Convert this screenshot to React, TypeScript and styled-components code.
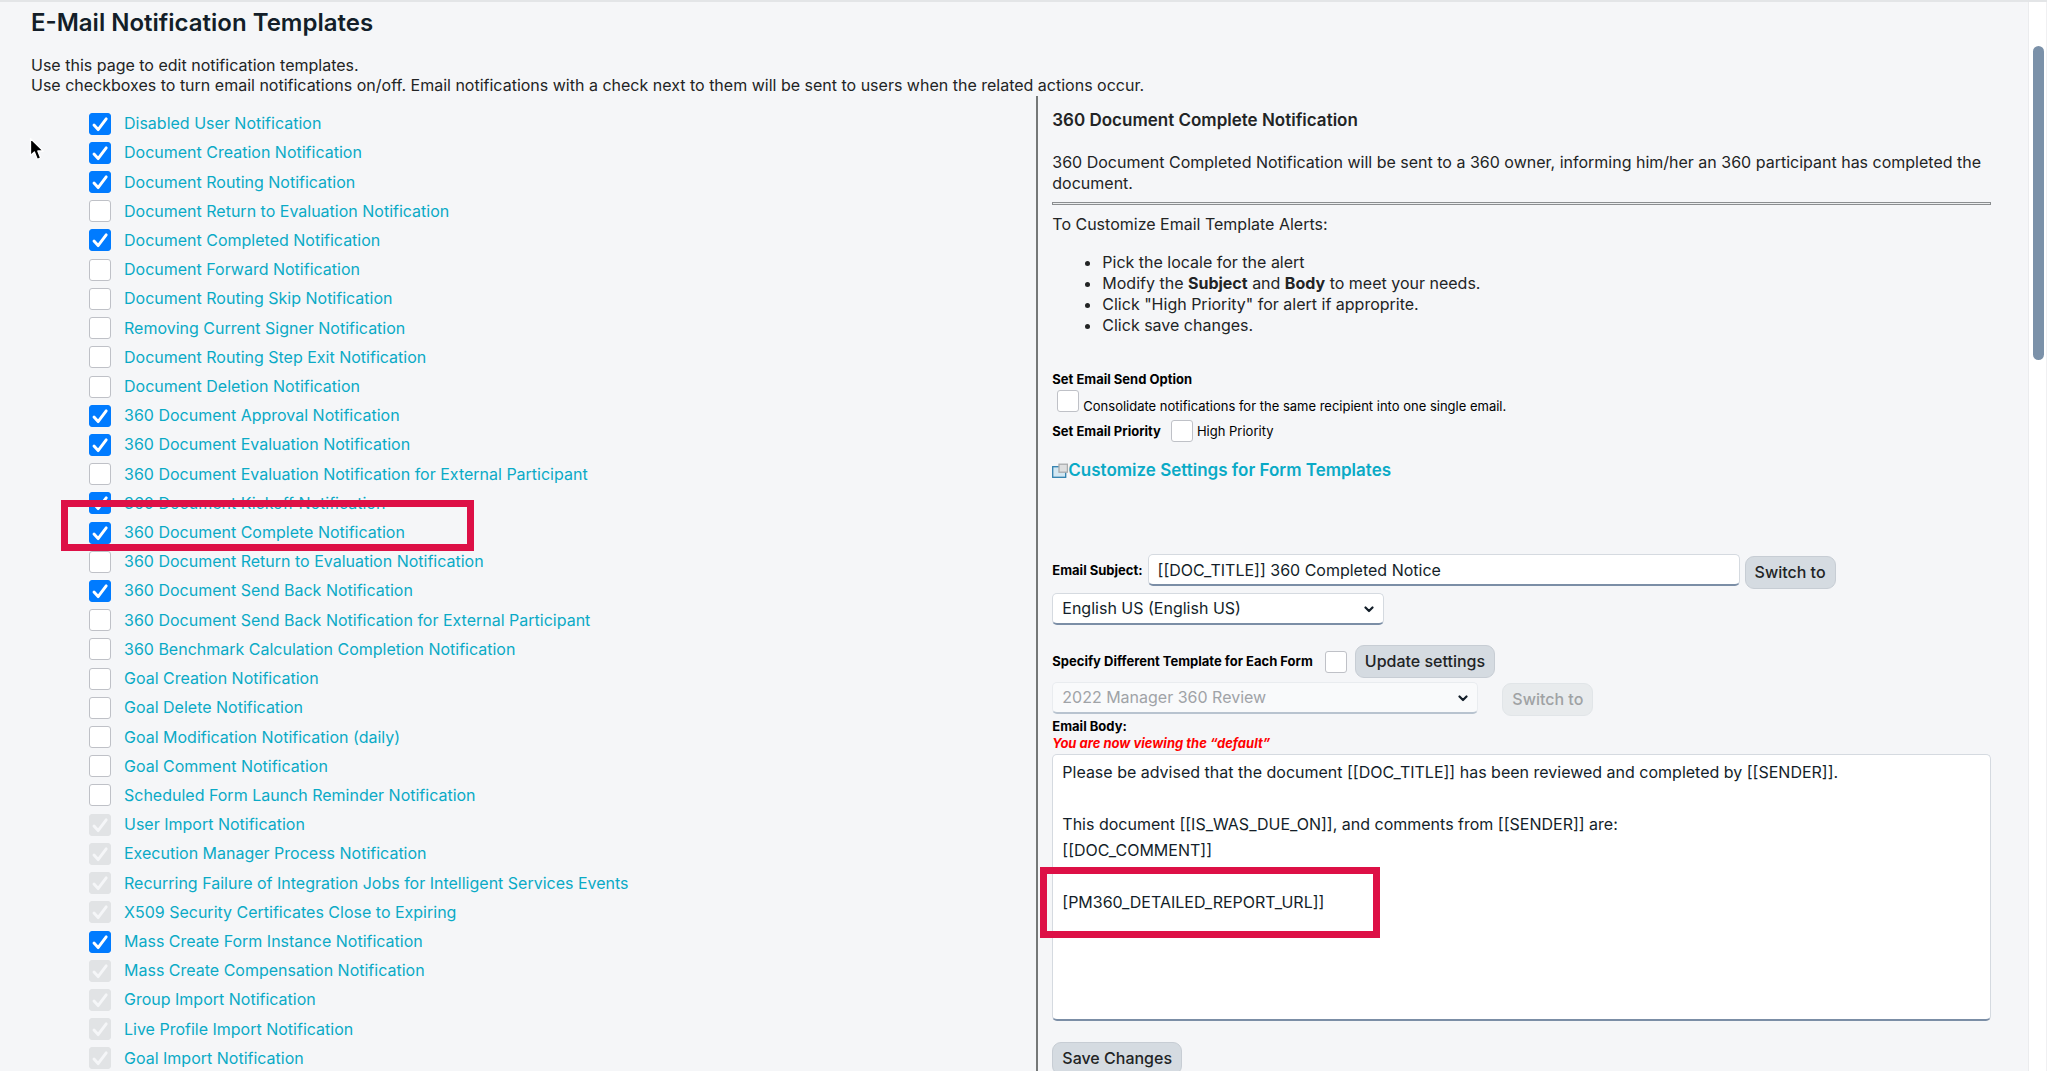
import React from "react";
import styled, { createGlobalStyle, css } from "styled-components";

const color = {
  page: "#f5f6f8",
  text: "#222425",
  ink: "#131e29",
  link: "#0aaac6",
  blue: "#007bff",
  highlight: "#dd1046",
  edge: "#d5dae0",
};

const GlobalStyle = createGlobalStyle`
  *, *::before, *::after { box-sizing: border-box; }
  body {
    margin: 0;
    background: ${color.page};
    color: ${color.text};
    font-family: Inter, "Liberation Sans", Arial, sans-serif;
    font-size: 16px;
    line-height: 21px;
  }
  input, select, textarea, button { font: inherit; }
`;

const Page = styled.div`
  display: flex;
  height: 100vh;
  overflow: hidden;
  border-top: 2px solid #e3e5e7;
`;

const Main = styled.main`
  position: relative;
  flex: 1;
  min-width: 0;
  display: flex;
  flex-direction: column;
`;

const PageHeader = styled.header`
  padding: 6px 31px 1px;
`;

const PageTitle = styled.h1`
  margin: 0 0 17px;
  font-size: 24px;
  line-height: 30px;
  font-weight: 600;
  color: ${color.ink};
`;

const Intro = styled.p`
  margin: 0;
  line-height: 20px;
`;

const Columns = styled.div`
  flex: 1;
  min-height: 0;
  display: grid;
  grid-template-columns: minmax(0, 511fr) minmax(0, 489fr);
`;

const NotificationList = styled.ul`
  list-style: none;
  margin: 0 0 -2px;
  padding: 13px 0 0 89px;
  min-height: 0;
  display: grid;
  grid-auto-rows: minmax(0, 1fr);
`;

const NotificationRow = styled.li`
  position: relative;
  display: flex;
  align-items: center;
  gap: 13px;
`;

const NotificationLink = styled.a`
  color: ${color.link};
  text-decoration: none;
`;

const Highlight = styled.div`
  position: absolute;
  border: 7px solid ${color.highlight};
  pointer-events: none;
  z-index: 1;
`;

const RowHighlight = styled(Highlight)`
  left: -28px;
  top: -18px;
  width: 413px;
  height: 51px;
`;

const TokenHighlight = styled(Highlight)`
  left: -12px;
  top: 113px;
  width: 340px;
  height: 71px;
`;

const CheckFrame = styled.span`
  position: relative;
  flex: none;
  display: block;
  width: 22px;
  height: 22px;
`;

const CheckInput = styled.input`
  appearance: none;
  display: block;
  width: 22px;
  height: 22px;
  margin: 0;
  border: 1px solid #bfc1c7;
  border-radius: 3px;
  background: #fff;
  &:checked {
    border-color: ${color.blue};
    background: ${color.blue};
  }
  &:checked:disabled {
    border-color: #e1e3e5;
    background: #e1e3e5;
  }
`;

const CheckMark = styled.svg`
  position: absolute;
  inset: 0;
  pointer-events: none;
`;

const Detail = styled.section`
  min-height: 0;
  overflow: hidden;
  padding: 14px 37px 0 14px;
  border-left: 2px solid #757878;
`;

const DetailTitle = styled.h2`
  margin: 0 0 21px;
  font-size: 17px;
  line-height: 21px;
  font-weight: 600;
`;

const Paragraph = styled.p`
  margin: 0;
`;

const Rule = styled.hr`
  margin: 8px 0 9px;
  height: 3px;
  border: 1px solid #8b8e90;
  background: #eceeef;
`;

const Steps = styled.ul`
  margin: 17px 0 0;
  padding: 0 0 0 50px;
  line-height: 21px;
  b { font-weight: 700; }
`;

const SmallHeading = styled.h3`
  margin: 34px 0 0;
  font-size: 13px;
  line-height: 18px;
  font-weight: 700;
  color: #000;
`;

const OptionRow = styled.div`
  display: flex;
  align-items: center;
  gap: 4px;
  color: #000;
  font-size: 13px;
  line-height: 18px;
`;

const ConsolidateRow = styled(OptionRow)`
  align-items: flex-end;
  margin: 2px 0 5px 5px;
  ${CheckFrame} { margin-bottom: 3px; }
`;

const PriorityLabel = styled.b`
  margin-right: 6px;
`;

const SettingsLink = styled.a`
  display: flex;
  align-items: center;
  width: max-content;
  margin: 18px 0 70px;
  color: ${color.link};
  font-size: 17px;
  font-weight: 600;
  text-decoration: none;
`;

const FieldRow = styled.div<{ $gap: number; $drop?: number }>`
  display: flex;
  align-items: center;
  gap: ${(p) => p.$gap}px;
  > button { margin-top: ${(p) => p.$drop ?? 0}px; }
`;

const FieldLabel = styled.label`
  font-size: 13px;
  line-height: 17px;
  font-weight: 700;
  color: #000;
`;

const field = css`
  border: 1px solid ${color.edge};
  border-bottom: 2px solid #7b8ea6;
  border-radius: 5px;
  background: #fff;
  color: ${color.ink};
  padding: 0 9px;
`;

const SubjectInput = styled.input`
  ${field}
  flex: 0 1 592px;
  min-width: 0;
  height: 32px;
  outline: none;
`;

const SelectFrame = styled.span<{ $width: number }>`
  position: relative;
  display: block;
  flex: 0 1 ${(p) => p.$width}px;
  width: ${(p) => p.$width}px;
`;

const Select = styled.select`
  ${field}
  appearance: none;
  display: block;
  width: 100%;
  height: 32px;
  &:disabled {
    opacity: 1;
    color: #a0a3a7;
    background: #f9fafb;
    border-color: #e9ecef;
    border-bottom-color: #b8c3cf;
  }
`;

const Chevron = styled.svg`
  position: absolute;
  right: 10px;
  top: 13px;
  pointer-events: none;
`;

const Button = styled.button`
  flex: none;
  height: 33px;
  padding: 0 9px;
  border: 1px solid #c7cdd4;
  border-radius: 9px;
  background: #d5dbe1;
  color: ${color.text};
  font-weight: 500;
  &:disabled {
    border-color: #e1e5e8;
    background: #e8ebed;
    color: #9fa2a4;
  }
`;

const LocaleRow = styled.div`
  margin: 4px 0 20px;
`;

const SpecifyRow = styled(FieldRow)`
  margin-bottom: 2px;
  ${FieldLabel} { margin-right: 4px; }
`;

const BodyLabel = styled(FieldLabel)`
  display: block;
  margin-top: 2px;
`;

const DefaultNote = styled.p`
  margin: 0 0 2px;
  font-size: 13px;
  line-height: 17px;
  font-weight: 700;
  font-style: italic;
  color: #f00;
`;

const BodyFrame = styled.div`
  position: relative;
  margin-bottom: 21px;
`;

const BodyInput = styled.textarea`
  ${field}
  display: block;
  width: 100%;
  height: 267px;
  padding: 4px 9px;
  line-height: 26px;
  resize: none;
  outline: none;
`;

const ScrollRail = styled.div`
  flex: none;
  width: 19px;
  padding: 44px 0 0 4px;
  border-left: 1px solid #ebecee;
  border-right: 1px solid #f0f0f2;
  background: #fff;
`;

const ScrollThumb = styled.div`
  width: 11px;
  height: 314px;
  border-radius: 6px;
  background: #7b91a9;
`;

const Pointer = styled.svg`
  position: absolute;
  left: 28px;
  top: 133px;
  pointer-events: none;
`;

type State = "on" | "off" | "locked";

const notifications: [string, State][] = [
  ["Disabled User Notification", "on"],
  ["Document Creation Notification", "on"],
  ["Document Routing Notification", "on"],
  ["Document Return to Evaluation Notification", "off"],
  ["Document Completed Notification", "on"],
  ["Document Forward Notification", "off"],
  ["Document Routing Skip Notification", "off"],
  ["Removing Current Signer Notification", "off"],
  ["Document Routing Step Exit Notification", "off"],
  ["Document Deletion Notification", "off"],
  ["360 Document Approval Notification", "on"],
  ["360 Document Evaluation Notification", "on"],
  ["360 Document Evaluation Notification for External Participant", "off"],
  ["360 Document Kickoff Notification", "on"],
  ["360 Document Complete Notification", "on"],
  ["360 Document Return to Evaluation Notification", "off"],
  ["360 Document Send Back Notification", "on"],
  ["360 Document Send Back Notification for External Participant", "off"],
  ["360 Benchmark Calculation Completion Notification", "off"],
  ["Goal Creation Notification", "off"],
  ["Goal Delete Notification", "off"],
  ["Goal Modification Notification (daily)", "off"],
  ["Goal Comment Notification", "off"],
  ["Scheduled Form Launch Reminder Notification", "off"],
  ["User Import Notification", "locked"],
  ["Execution Manager Process Notification", "locked"],
  ["Recurring Failure of Integration Jobs for Intelligent Services Events", "locked"],
  ["X509 Security Certificates Close to Expiring", "locked"],
  ["Mass Create Form Instance Notification", "on"],
  ["Mass Create Compensation Notification", "locked"],
  ["Group Import Notification", "locked"],
  ["Live Profile Import Notification", "locked"],
  ["Goal Import Notification", "locked"],
];

const selected = "360 Document Complete Notification";

const bodyText = `Please be advised that the document [[DOC_TITLE]] has been reviewed and completed by [[SENDER]].

This document [[IS_WAS_DUE_ON]], and comments from [[SENDER]] are:
[[DOC_COMMENT]]

[PM360_DETAILED_REPORT_URL]]`;

function Checkbox({ id, state = "off", labelledBy }: { id?: string; state?: State; labelledBy?: string }) {
  return (
    <CheckFrame>
      <CheckInput
        type="checkbox"
        id={id}
        aria-labelledby={labelledBy}
        defaultChecked={state !== "off"}
        disabled={state === "locked"}
      />
      {state !== "off" && (
        <CheckMark viewBox="0 0 22 22" width="22" height="22" aria-hidden="true">
          <path
            d="M5 12.1 9.1 16.6 17.2 5.8"
            fill="none"
            stroke={state === "locked" ? "#f5f6f8" : "#fff"}
            strokeWidth="2.9"
            strokeLinecap="round"
            strokeLinejoin="round"
          />
        </CheckMark>
      )}
    </CheckFrame>
  );
}

function DropDown({ id, label, width, value, disabled }: { id: string; label: string; width: number; value: string; disabled?: boolean }) {
  return (
    <SelectFrame $width={width}>
      <Select id={id} aria-label={label} disabled={disabled} defaultValue={value}>
        <option value={value}>{value}</option>
      </Select>
      <Chevron width="10" height="7" viewBox="0 0 10 7" aria-hidden="true">
        <path d="M1.5 1.5 5 5 8.5 1.5" fill="none" stroke="#131e29" strokeWidth="2.2" strokeLinecap="round" strokeLinejoin="round" />
      </Chevron>
    </SelectFrame>
  );
}

function WindowsIcon() {
  return (
    <svg width="16" height="16" viewBox="0 0 16 16" aria-hidden="true">
      <rect x="0.7" y="3.7" width="13" height="10.6" fill="#d3e7f2" stroke="#2f7fae" strokeWidth="1.3" />
      <rect x="7" y="1.2" width="8.4" height="8" fill="#dedfe0" stroke="#a9abad" strokeWidth="1.3" />
    </svg>
  );
}

export default function App() {
  return (
    <>
      <GlobalStyle />
      <Page>
        <Main>
          <PageHeader>
            <PageTitle>E-Mail Notification Templates</PageTitle>
            <Intro>Use this page to edit notification templates.</Intro>
            <Intro>
              Use checkboxes to turn email notifications on/off. Email notifications with a check next to them will be
              sent to users when the related actions occur.
            </Intro>
          </PageHeader>
          <Columns>
            <NotificationList>
              {notifications.map(([name, state], i) => (
                <NotificationRow key={name}>
                  <Checkbox state={state} labelledBy={`notification-${i}`} />
                  <NotificationLink id={`notification-${i}`} href="#">
                    {name}
                  </NotificationLink>
                  {name === selected && <RowHighlight />}
                </NotificationRow>
              ))}
            </NotificationList>
            <Detail>
              <DetailTitle>{selected}</DetailTitle>
              <Paragraph>
                360 Document Completed Notification will be sent to a 360 owner, informing him/her an 360 participant
                has completed the document.
              </Paragraph>
              <Rule />
              <Paragraph>To Customize Email Template Alerts:</Paragraph>
              <Steps>
                <li>Pick the locale for the alert</li>
                <li>
                  Modify the <b>Subject</b> and <b>Body</b> to meet your needs.
                </li>
                <li>Click "High Priority" for alert if approprite.</li>
                <li>Click save changes.</li>
              </Steps>
              <SmallHeading>Set Email Send Option</SmallHeading>
              <ConsolidateRow>
                <Checkbox id="consolidate" />
                <label htmlFor="consolidate">
                  Consolidate notifications for the same recipient into one single email.
                </label>
              </ConsolidateRow>
              <OptionRow>
                <PriorityLabel>Set Email Priority</PriorityLabel>
                <Checkbox id="priority" />
                <label htmlFor="priority">High Priority</label>
              </OptionRow>
              <SettingsLink href="#">
                <WindowsIcon />
                Customize Settings for Form Templates
              </SettingsLink>
              <FieldRow $gap={5} $drop={5}>
                <FieldLabel htmlFor="subject">Email Subject:</FieldLabel>
                <SubjectInput id="subject" type="text" defaultValue="[[DOC_TITLE]] 360 Completed Notice" />
                <Button type="button">Switch to</Button>
              </FieldRow>
              <LocaleRow>
                <DropDown id="locale" label="Locale" width={332} value="English US (English US)" />
              </LocaleRow>
              <SpecifyRow $gap={8}>
                <FieldLabel htmlFor="specify">Specify Different Template for Each Form</FieldLabel>
                <Checkbox id="specify" />
                <Button type="button">Update settings</Button>
              </SpecifyRow>
              <FieldRow $gap={24} $drop={3}>
                <DropDown id="form" label="Form template" width={426} value="2022 Manager 360 Review" disabled />
                <Button type="button" disabled>
                  Switch to
                </Button>
              </FieldRow>
              <BodyLabel htmlFor="body">Email Body:</BodyLabel>
              <DefaultNote>You are now viewing the “default”</DefaultNote>
              <BodyFrame>
                <BodyInput id="body" spellCheck={false} defaultValue={bodyText} />
                <TokenHighlight />
              </BodyFrame>
              <Button type="button">Save Changes</Button>
            </Detail>
          </Columns>
          <Pointer width="20" height="30" viewBox="0 0 20 30" aria-hidden="true">
            <path
              d="M2.5 3.5V20.5L6.4 17 9.3 24.4 12.6 23 9.8 16H15.3Z"
              fill="#000"
              stroke="#fff"
              strokeWidth="1.3"
              strokeLinejoin="round"
            />
          </Pointer>
        </Main>
        <ScrollRail>
          <ScrollThumb />
        </ScrollRail>
      </Page>
    </>
  );
}
